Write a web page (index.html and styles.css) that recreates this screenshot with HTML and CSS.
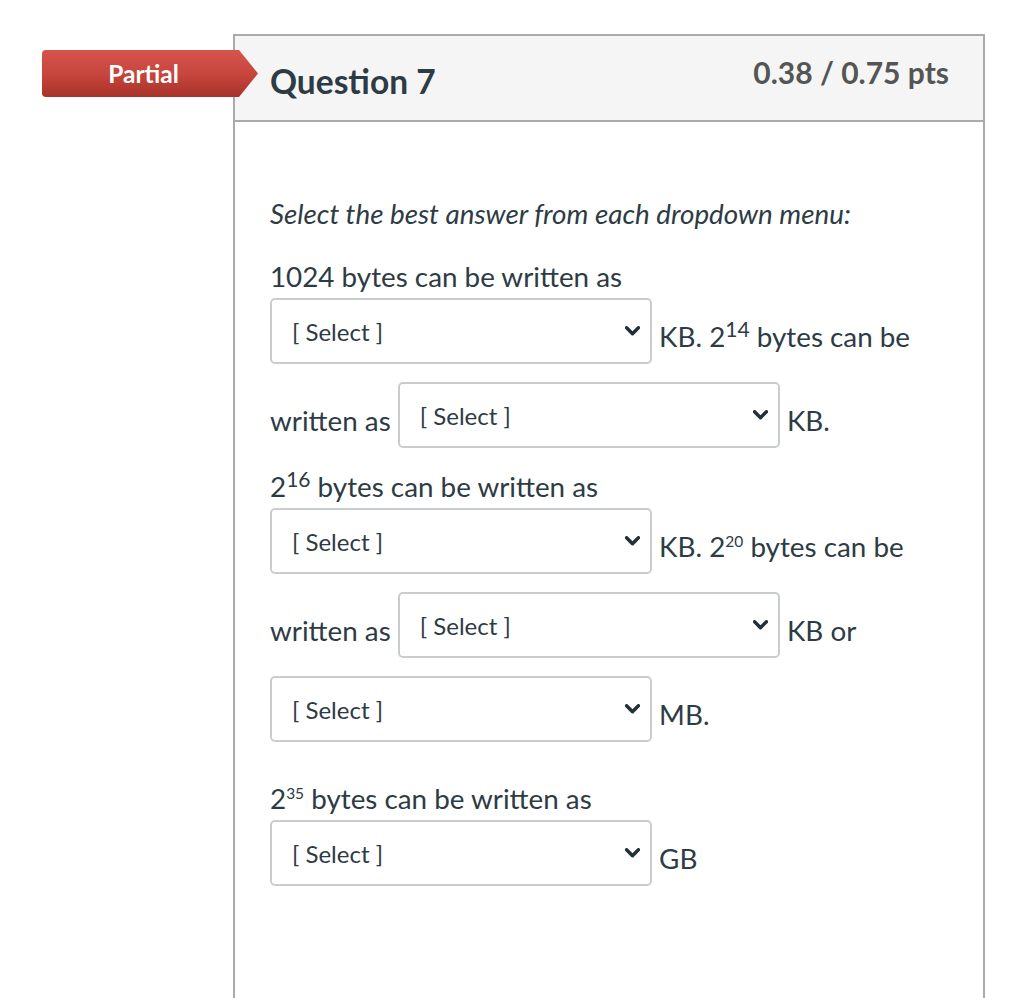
FILE: index.html
```html
<!DOCTYPE html>
<html lang="en">
<head>
<meta charset="utf-8">
<title>Question 7</title>
<link rel="stylesheet" href="styles.css">
</head>

<body>
	<div class="page">
		<div class="answerArrow">Partial</div>

		<div class="question">
			<div class="header">
				<h2 class="questionName">Question 7</h2>
				<span class="points">0.38 / 0.75 pts</span>
			</div>

			<div class="questionText">
				<p class="intro"><em>Select the best answer from each dropdown menu:</em></p>

				<p class="partOne">1024 bytes can be written as
					<span class="dropdown"><select><option>[ Select ]</option></select><svg class="chevron" viewBox="0 0 14 9"><path d="M1.5 1.5 L7 7 L12.5 1.5"/></svg></span>
					KB. 2<sup class="big">14</sup> bytes can be written as
					<span class="dropdown"><select><option>[ Select ]</option></select><svg class="chevron" viewBox="0 0 14 9"><path d="M1.5 1.5 L7 7 L12.5 1.5"/></svg></span>
					KB.</p>

				<p class="partTwo">2<sup class="big">16</sup> bytes can be written as
					<span class="dropdown"><select><option>[ Select ]</option></select><svg class="chevron" viewBox="0 0 14 9"><path d="M1.5 1.5 L7 7 L12.5 1.5"/></svg></span>
					KB. 2<sup class="small">20</sup> bytes can be written as
					<span class="dropdown"><select><option>[ Select ]</option></select><svg class="chevron" viewBox="0 0 14 9"><path d="M1.5 1.5 L7 7 L12.5 1.5"/></svg></span>
					KB or
					<span class="dropdown"><select><option>[ Select ]</option></select><svg class="chevron" viewBox="0 0 14 9"><path d="M1.5 1.5 L7 7 L12.5 1.5"/></svg></span>
					MB.</p>

				<p class="partThree">2<sup class="small">35</sup> bytes can be written as
					<span class="dropdown"><select><option>[ Select ]</option></select><svg class="chevron" viewBox="0 0 14 9"><path d="M1.5 1.5 L7 7 L12.5 1.5"/></svg></span>
					GB</p>
			</div>
		</div>
	</div>
</body>
</html>
```

FILE: styles.css
```css
body {
	margin: 0;
	font-family: Lato, "Noto Sans", Arial, sans-serif;
	color: #2d3b45;
	background: #fff;
}

.page {
	position: relative;
	padding: 34px 0 0 233px;
}

.answerArrow {
	position: absolute;
	left: 42px;
	top: 50px;
	width: 216px;
	height: 47px;
	box-sizing: border-box;
	padding: 0 19px 0 6px;
	border-radius: 4px 0 0 4px;
	background: linear-gradient(#d6544b, #c5443b 55%, #a7322a);
	clip-path: polygon(0 0, calc(100% - 19px) 0, 100% 50%, calc(100% - 19px) 100%, 0 100%);
	color: #fff;
	font-size: 24.5px;
	font-weight: 700;
	line-height: 47px;
	text-align: center;
}

.question {
	width: 752px;
	height: 964px;
	box-sizing: border-box;
	border: 2px solid #aaa;
	border-bottom: 0;
}

.header {
	display: flex;
	justify-content: space-between;
	align-items: flex-start;
	height: 84px;
	padding: 0 34px 0 35px;
	background: #f5f5f5;
	border-bottom: 2px solid #aaa;
}

.questionName {
	margin: 27px 0 0;
	font-size: 33.5px;
	line-height: 36px;
	font-weight: 700;
}

.points {
	margin-top: 21px;
	font-size: 30px;
	line-height: 31px;
	font-weight: 700;
	color: #555;
}

.questionText {
	padding: 71px 34px 0 35px;
	font-size: 27.8px;
	line-height: 42px;
}

.questionText p {
	margin: 0;
}

.questionText .intro {
	margin-bottom: 21px;
}

.questionText .partThree {
	margin-top: 18px;
}

sup {
	line-height: 0;
	vertical-align: 10px;
}

sup.big {
	font-size: 21px;
}

sup.small {
	font-size: 15.5px;
}

.dropdown {
	position: relative;
	display: inline-block;
	margin: 0 0 18px;
	vertical-align: 6px;
}

.dropdown select {
	-webkit-appearance: none;
	appearance: none;
	display: block;
	width: 382px;
	height: 66px;
	box-sizing: border-box;
	margin: 0;
	padding: 0 40px 0 20px;
	border: 2px solid #c9cdd0;
	border-radius: 5px;
	background: #fff;
	color: #2d3b45;
	font-family: Lato, "Noto Sans", Arial, sans-serif;
	font-size: 24px;
}

.chevron {
	position: absolute;
	right: 12px;
	top: 28px;
	width: 15px;
	height: 10px;
	fill: none;
	stroke: #22303a;
	stroke-width: 3.2;
	stroke-linecap: round;
	stroke-linejoin: round;
}
```
